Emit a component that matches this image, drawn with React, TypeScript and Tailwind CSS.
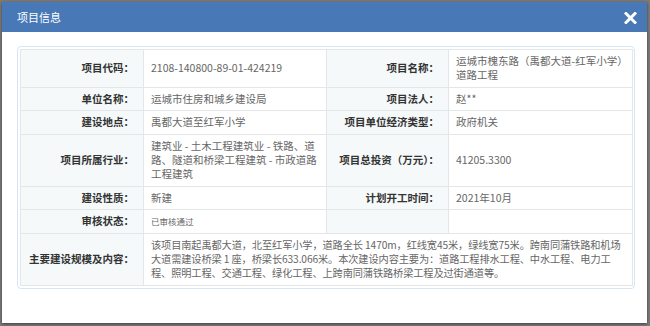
export default function App() {
  const label = "bg-[#f5f9fa] text-right font-bold text-[#333] pr-[9px] pl-1 align-middle whitespace-nowrap";
  const value = "text-[#666] px-[7px] align-middle";
  const cell = "border border-[#e3e7ea] py-[4px] leading-[14.4px]";

  return (
    <div
      className="w-[650px] h-[326px] bg-[#7b7b7b] pt-[2px] px-[2px] overflow-hidden"
      style={{ fontFamily: '"Noto Sans CJK SC", "Noto Sans", sans-serif' }}
    >
      <div className="w-[645px] h-[321px] bg-white shadow-[0_1px_3px_rgba(0,0,0,0.5)] flex flex-col">
        {/* header */}
        <div className="h-[30px] bg-[#4879b6] flex items-center justify-between pl-[15px] pr-[10px] shrink-0">
          <span className="text-white text-[11px]">项目信息</span>
          <svg width="13" height="12" viewBox="0 0 13 12" className="mt-[1px]">
            <path d="M2 1.5 L11 10.5 M11 1.5 L2 10.5" stroke="white" strokeWidth="3" strokeLinecap="square" />
          </svg>
        </div>

        {/* body */}
        <div className="pt-[14px] pl-[15px] pr-[12px]">
          <div className="border border-[#d5e6f4] rounded-[4px] p-[2px]">
            <table className="w-[612px] table-fixed border-collapse text-[10.5px]">
              <colgroup>
                <col className="w-[123px]" />
                <col className="w-[183px]" />
                <col className="w-[122px]" />
                <col className="w-[184px]" />
              </colgroup>
              <tbody>
                <tr>
                  <td className={`${cell} ${label}`}>项目代码：</td>
                  <td className={`${cell} ${value}`}>2108-140800-89-01-424219</td>
                  <td className={`${cell} ${label}`}>项目名称：</td>
                  <td className={`${cell} ${value}`}>运城市槐东路（禹都大道-红军小学）道路工程</td>
                </tr>
                <tr>
                  <td className={`${cell} ${label}`}>单位名称：</td>
                  <td className={`${cell} ${value}`}>运城市住房和城乡建设局</td>
                  <td className={`${cell} ${label}`}>项目法人：</td>
                  <td className={`${cell} ${value}`}>赵**</td>
                </tr>
                <tr>
                  <td className={`${cell} ${label}`}>建设地点：</td>
                  <td className={`${cell} ${value}`}>禹都大道至红军小学</td>
                  <td className={`${cell} ${label}`}>项目单位经济类型：</td>
                  <td className={`${cell} ${value}`}>政府机关</td>
                </tr>
                <tr>
                  <td className={`${cell} ${label}`}>项目所属行业：</td>
                  <td className={`${cell} ${value}`}>建筑业 - 土木工程建筑业 - 铁路、道路、隧道和桥梁工程建筑 - 市政道路工程建筑</td>
                  <td className={`${cell} ${label}`}>项目总投资（万元）：</td>
                  <td className={`${cell} ${value}`}>41205.3300</td>
                </tr>
                <tr>
                  <td className={`${cell} ${label}`}>建设性质：</td>
                  <td className={`${cell} ${value}`}>新建</td>
                  <td className={`${cell} ${label}`}>计划开工时间：</td>
                  <td className={`${cell} ${value}`}>2021年10月</td>
                </tr>
                <tr>
                  <td className={`${cell} ${label}`}>审核状态：</td>
                  <td className={`${cell} ${value} text-[8.5px]`}>已审核通过</td>
                  <td className={`${cell} ${label}`}></td>
                  <td className={`${cell} ${value}`}></td>
                </tr>
                <tr>
                  <td className={`${cell} ${label}`}>主要建设规模及内容：</td>
                  <td colSpan={3} className={`${cell} ${value} text-[10.2px] tracking-[-0.1px]`}>
                    该项目南起禹都大道，北至红军小学，道路全长 1470m，红线宽45米，绿线宽75米。跨南同蒲铁路和机场大道需建设桥梁 1 座，桥梁长633.066米。本次建设内容主要为：道路工程排水工程、中水工程、电力工程、照明工程、交通工程、绿化工程、上跨南同蒲铁路桥梁工程及过街通道等。
                  </td>
                </tr>
              </tbody>
            </table>
          </div>
        </div>
      </div>
    </div>
  );
}
